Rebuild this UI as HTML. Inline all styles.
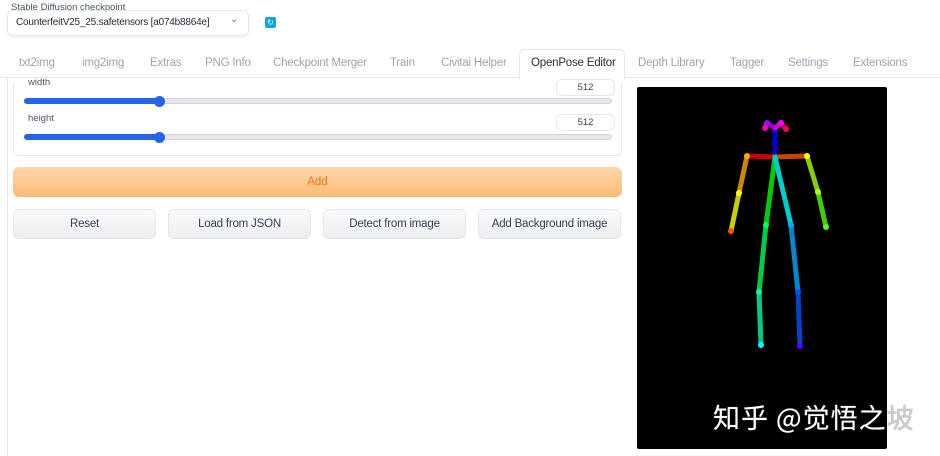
<!DOCTYPE html>
<html><head><meta charset="utf-8"><style>
*{box-sizing:border-box;margin:0;padding:0}
body{width:940px;height:456px;background:#fff;font-family:"Liberation Sans","Noto Sans CJK SC",sans-serif;position:relative;overflow:hidden;color:#374151}
.abs{position:absolute}
.lbl{font-size:9.5px;color:#4b5563}
.tab{position:absolute;top:57px;font-size:11.5px;color:#9ca3af;letter-spacing:-0.2px}
.btn{position:absolute;top:209px;height:30px;width:143px;border:1px solid #e5e7eb;border-radius:6px;background:linear-gradient(#f9fafb,#eceef1);font-size:11.5px;color:#374151;display:flex;align-items:center;justify-content:center;letter-spacing:-0.2px}
.track{position:absolute;left:24px;width:588px;height:6px;border-radius:3px;background:#e5e7eb;border:1px solid #d1d5db}
.fill{position:absolute;left:24px;width:135px;height:6px;border-radius:3px;background:#2563eb}
.knob{position:absolute;width:11px;height:11px;border-radius:50%;background:#2563eb}
.num{position:absolute;left:556px;width:59px;height:17px;border:1px solid #e5e7eb;border-radius:6px;font-size:9.5px;text-align:center;line-height:15px;color:#374151}
</style></head><body>
<div class="abs lbl" style="left:11px;top:2px">Stable Diffusion checkpoint</div>
<div class="abs" style="left:7px;top:10px;width:242px;height:26px;border:1px solid #e5e7eb;border-radius:6px;box-shadow:0 1px 2px rgba(0,0,0,.08)"></div>
<div class="abs" style="left:16px;top:17px;font-size:10px;color:#1f2937;letter-spacing:-0.2px">CounterfeitV25_25.safetensors [a074b8864e]</div>
<div class="abs" style="left:230px;top:14px;font-size:10px;color:#6b7280">&#8964;</div>
<div class="abs" style="left:265px;top:17px;width:11px;height:11px;background:#0ea5e9;border-radius:2px;color:#fff;font-size:8px;line-height:11px;text-align:center">&#8635;</div>

<div class="abs" style="left:0;top:77px;width:940px;height:1px;background:#e5e7eb"></div>
<div class="abs" style="left:519px;top:49px;width:106px;height:30px;border:1px solid #e5e7eb;border-bottom:none;border-radius:6px 6px 0 0;background:#fff"></div>
<div class="tab" style="left:19px">txt2img</div>
<div class="tab" style="left:82px">img2img</div>
<div class="tab" style="left:150px">Extras</div>
<div class="tab" style="left:205px">PNG Info</div>
<div class="tab" style="left:273px">Checkpoint Merger</div>
<div class="tab" style="left:390px">Train</div>
<div class="tab" style="left:441px">Civitai Helper</div>
<div class="tab" style="left:531px;color:#1f2937">OpenPose Editor</div>
<div class="tab" style="left:638px">Depth Library</div>
<div class="tab" style="left:730px">Tagger</div>
<div class="tab" style="left:788px">Settings</div>
<div class="tab" style="left:853px">Extensions</div>

<div class="abs" style="left:7px;top:78px;width:1px;height:378px;background:#e5e7eb"></div>
<div class="abs" style="left:13px;top:84px;width:609px;height:72px;border:1px solid #e5e7eb;border-top:none;border-radius:0 0 6px 6px"></div>
<div class="abs lbl" style="left:28px;top:77px">width</div>
<div class="num" style="top:79px">512</div>
<div class="track" style="top:98px"></div><div class="fill" style="top:98px"></div><div class="knob" style="left:154px;top:96px"></div>
<div class="abs lbl" style="left:28px;top:113px">height</div>
<div class="num" style="top:114px">512</div>
<div class="track" style="top:134px"></div><div class="fill" style="top:134px"></div><div class="knob" style="left:154px;top:132px"></div>

<div class="abs" style="left:13px;top:167px;width:609px;height:30px;border-radius:6px;background:linear-gradient(#fed7aa,#fdba74);color:#f97316;font-size:11.5px;text-align:center;line-height:30px">Add</div>
<div class="btn" style="left:13px">Reset</div>
<div class="btn" style="left:168px">Load from JSON</div>
<div class="btn" style="left:323px">Detect from image</div>
<div class="btn" style="left:478px">Add Background image</div>

<svg class="abs" style="left:636px;top:86px" width="252" height="364" viewBox="636 86 252 364">
<rect x="637" y="87" width="250" height="362" rx="2" fill="#000"/>
<g stroke-width="5" stroke-linecap="round" opacity="0.8">
<line x1="775" y1="128" x2="775" y2="157" stroke="#0000ff"/>
<line x1="775" y1="128" x2="767" y2="123" stroke="#aa00ff"/>
<line x1="775" y1="128" x2="781" y2="123" stroke="#ff00ff"/>
<line x1="767" y1="123" x2="765" y2="128" stroke="#ff00aa"/>
<line x1="781" y1="123" x2="786" y2="129" stroke="#ff0055"/>
<line x1="775" y1="157" x2="747" y2="156" stroke="#ff0000"/>
<line x1="775" y1="157" x2="807" y2="156" stroke="#ff5500"/>
<line x1="747" y1="156" x2="739" y2="193" stroke="#ffaa00"/>
<line x1="739" y1="193" x2="731" y2="231" stroke="#ffff00"/>
<line x1="807" y1="156" x2="818" y2="192" stroke="#aaff00"/>
<line x1="818" y1="192" x2="826" y2="227" stroke="#55ff00"/>
<line x1="775" y1="157" x2="766" y2="225" stroke="#00ff00"/>
<line x1="766" y1="225" x2="759" y2="292" stroke="#00ff55"/>
<line x1="759" y1="292" x2="761" y2="345" stroke="#00ffaa"/>
<line x1="775" y1="157" x2="791" y2="225" stroke="#00ffff"/>
<line x1="791" y1="225" x2="798" y2="292" stroke="#00aaff"/>
<line x1="798" y1="292" x2="800" y2="346" stroke="#0055ff"/>
</g>
<g>
<circle cx="767" cy="123" r="3" fill="#aa00ff"/><circle cx="781" cy="123" r="3" fill="#ff00ff"/>
<circle cx="765" cy="128" r="3" fill="#ff00aa"/><circle cx="786" cy="129" r="3" fill="#ff0055"/>
<circle cx="747" cy="156" r="3" fill="#ffaa00"/><circle cx="807" cy="156" r="3" fill="#ffff00"/>
<circle cx="739" cy="193" r="3" fill="#ffff00"/><circle cx="731" cy="231" r="3" fill="#ff5500"/>
<circle cx="818" cy="192" r="3" fill="#aaff00"/><circle cx="826" cy="227" r="3" fill="#55ff00"/>
<circle cx="766" cy="225" r="3" fill="#00ff55"/><circle cx="791" cy="225" r="3" fill="#00aaff"/>
<circle cx="759" cy="292" r="3" fill="#00ffaa"/><circle cx="798" cy="292" r="3" fill="#0055ff"/>
<circle cx="761" cy="345" r="3" fill="#00ffff"/><circle cx="800" cy="346" r="3" fill="#5500ff"/>
</g>
</svg>
<div class="abs" style="left:713px;top:397px;font-size:27px;color:#fff;font-family:'Noto Sans CJK SC',sans-serif;white-space:nowrap;letter-spacing:1px;text-shadow:0 0 1px #888">知乎 @觉悟之<span style="color:#ccc">坡</span></div>
</body></html>
